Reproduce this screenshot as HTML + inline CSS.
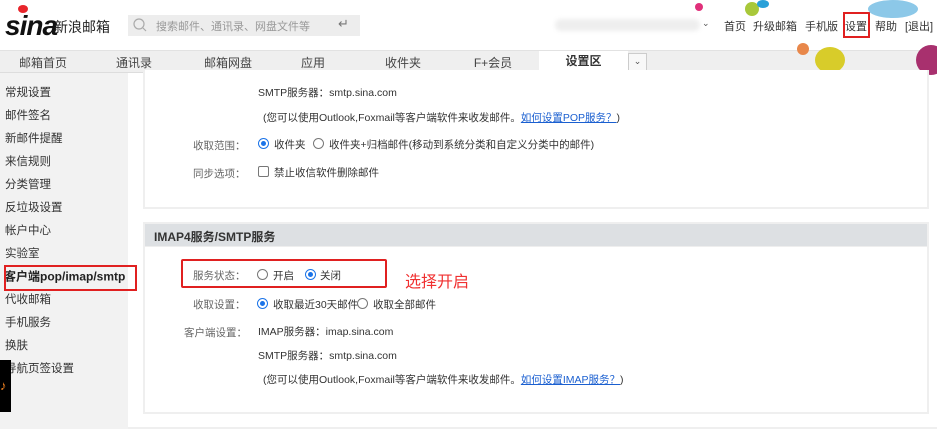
<!DOCTYPE html>
<html><head><meta charset="utf-8"><style>
*{margin:0;padding:0;box-sizing:border-box}
body{width:937px;height:429px;overflow:hidden;background:#fff;font-family:"Liberation Sans","Noto Sans CJK SC",sans-serif;font-size:12px;color:#333;position:relative}
.a{position:absolute;white-space:nowrap}
.nav{position:absolute;left:0;top:50px;width:937px;height:23px;background:#efefef;border-top:1px solid #e2e2e2;border-bottom:1px solid #ddd}
.nav span{position:absolute;top:3px;font-size:12px;color:#444;transform:translateX(-50%);white-space:nowrap}
.side{position:absolute;left:0;top:73px;width:128px;height:356px;background:#f2f2f2}
.side div{position:absolute;left:5px;font-size:11.5px;color:#333;transform:translateY(-50%);white-space:nowrap}
.panel{position:absolute;border:2px solid #efefef;background:#fff}
.lbl{color:#666;font-size:10.5px}
.r{position:absolute;width:11px;height:11px;border:1px solid #777;border-radius:50%;background:#fff}
.r.on{border-color:#1a73e8}
.r.on::after{content:"";position:absolute;left:2px;top:2px;width:5px;height:5px;border-radius:50%;background:#1a73e8}
.t{font-size:10.5px;color:#333}
a{color:#1a5fd0;text-decoration:underline}
.dot{position:absolute;border-radius:50%}
</style></head><body>
<div class="a" style="left:5px;top:10px;font:italic bold 28px 'Liberation Sans',sans-serif;color:#111;letter-spacing:-1px">sina</div>
<div class="dot" style="left:18px;top:5px;width:10px;height:8px;background:#e8252b"></div>
<div class="a" style="left:54px;top:17px;font-size:14px;color:#222">新浪邮箱</div>
<div class="a" style="left:128px;top:15px;width:232px;height:21px;background:#ededed"></div>
<svg class="a" style="left:133px;top:18px" width="14" height="14"><circle cx="6" cy="6" r="5" fill="none" stroke="#aaa" stroke-width="1.2"/><path d="M10 10l3 3" stroke="#aaa" stroke-width="1.2"/></svg>
<div class="a" style="left:156px;top:18px;font-size:11px;color:#999">搜索邮件、通讯录、网盘文件等</div>
<div class="a" style="left:338px;top:16px;font-size:13px;color:#777">↵</div>
<div class="a" style="left:555px;top:19px;width:145px;height:12px;background:#eee;border-radius:6px;filter:blur(2px)"></div>
<div class="a" style="left:702px;top:18px;font-size:9px;color:#555">⌄</div>
<div class="a" style="left:724px;top:18px;font-size:11px;color:#333">首页</div>
<div class="a" style="left:753px;top:18px;font-size:11px;color:#333">升级邮箱</div>
<div class="a" style="left:805px;top:18px;font-size:11px;color:#333">手机版</div>
<div class="a" style="left:845px;top:18px;font-size:11px;color:#333">设置</div>
<div class="a" style="left:843px;top:12px;width:27px;height:26px;border:2px solid #e02020"></div>
<div class="a" style="left:875px;top:18px;font-size:11px;color:#333">帮助</div>
<div class="a" style="left:905px;top:18px;font-size:11px;color:#333">[退出]</div>
<div class="dot" style="left:695px;top:3px;width:8px;height:8px;background:#e0307a"></div>
<div class="dot" style="left:745px;top:2px;width:14px;height:14px;background:#a8c83a"></div>
<div class="dot" style="left:757px;top:0px;width:12px;height:8px;background:#2aa0d8"></div>
<div class="dot" style="left:868px;top:0;width:50px;height:18px;background:#8cc8e8"></div>
<div class="nav">
<span style="left:43px">邮箱首页</span><span style="left:134px">通讯录</span><span style="left:228px">邮箱网盘</span><span style="left:313px">应用</span><span style="left:403px">收件夹</span><span style="left:493px">F+会员</span>
</div>
<div class="a" style="left:539px;top:51px;width:89px;height:22px;background:#fff;text-align:center;line-height:21px;font-weight:bold;font-size:12px">设置区</div>
<div class="a" style="left:628px;top:53px;width:19px;height:19px;border:1px solid #ccc;background:#f8f8f8;text-align:center;font-size:9px;line-height:15px;color:#555">⌄</div>
<div class="dot" style="left:797px;top:43px;width:12px;height:12px;background:#e8874a"></div>
<div class="dot" style="left:815px;top:47px;width:30px;height:26px;background:#d8cc2a"></div>
<div class="dot" style="left:916px;top:45px;width:30px;height:30px;background:#a8306e"></div>
<div class="side">
<div style="top:19px">常规设置</div><div style="top:42px">邮件签名</div><div style="top:65px">新邮件提醒</div><div style="top:88px">来信规则</div><div style="top:111px">分类管理</div><div style="top:134px">反垃圾设置</div><div style="top:157px">帐户中心</div><div style="top:180px">实验室</div>
<div style="top:203px;left:4px;font-weight:bold;font-size:12px;color:#222">客户端pop/imap/smtp</div>
<div style="top:226px">代收邮箱</div><div style="top:249px">手机服务</div><div style="top:272px">换肤</div><div style="top:295px">导航页签设置</div>
</div>
<div class="a" style="left:4px;top:265px;width:133px;height:26px;border:2px solid #e02020"></div>
<div class="a" style="left:0;top:360px;width:11px;height:52px;background:#000"></div>
<div class="a" style="left:0;top:378px;color:#f08020;font-size:13px">♪</div>
<div class="panel" style="left:143px;top:70px;width:786px;height:139px;border-top:none"></div>
<div class="a t" style="left:258px;top:85px">SMTP服务器：smtp.sina.com</div>
<div class="a t" style="left:263px;top:110px">(您可以使用Outlook,Foxmail等客户端软件来收发邮件。<a>如何设置POP服务？</a>)</div>
<div class="a lbl" style="left:193px;top:138px">收取范围：</div>
<div class="r on" style="left:258px;top:138px"></div><div class="a t" style="left:274px;top:137px">收件夹</div>
<div class="r" style="left:313px;top:138px"></div><div class="a t" style="left:329px;top:137px">收件夹+归档邮件(移动到系统分类和自定义分类中的邮件)</div>
<div class="a lbl" style="left:193px;top:166px">同步选项：</div>
<div class="a" style="left:258px;top:166px;width:11px;height:11px;border:1px solid #777;border-radius:2px"></div>
<div class="a t" style="left:274px;top:165px">禁止收信软件删除邮件</div>
<div class="panel" style="left:143px;top:222px;width:786px;height:192px"></div>
<div class="a" style="left:145px;top:224px;width:782px;height:23px;background:#dde0e3;border-bottom:1px solid #eee"></div>
<div class="a" style="left:154px;top:228px;font-weight:bold;font-size:12px;color:#333">IMAP4服务/SMTP服务</div>
<div class="a" style="left:181px;top:259px;width:206px;height:29px;border:2px solid #e02020;border-radius:2px"></div>
<div class="a lbl" style="left:193px;top:268px">服务状态：</div>
<div class="r" style="left:257px;top:269px"></div><div class="a t" style="left:273px;top:268px">开启</div>
<div class="r on" style="left:305px;top:269px"></div><div class="a t" style="left:320px;top:268px">关闭</div>
<div class="a" style="left:405px;top:268px;color:#f03030;font-size:16px">选择开启</div>
<div class="a lbl" style="left:193px;top:297px">收取设置：</div>
<div class="r on" style="left:257px;top:298px"></div><div class="a t" style="left:273px;top:297px">收取最近30天邮件</div>
<div class="r" style="left:357px;top:298px"></div><div class="a t" style="left:373px;top:297px">收取全部邮件</div>
<div class="a lbl" style="left:184px;top:325px">客户端设置：</div>
<div class="a t" style="left:258px;top:324px">IMAP服务器：imap.sina.com</div>
<div class="a t" style="left:258px;top:348px">SMTP服务器：smtp.sina.com</div>
<div class="a t" style="left:263px;top:372px">(您可以使用Outlook,Foxmail等客户端软件来收发邮件。<a>如何设置IMAP服务？</a>)</div>
<div class="a" style="left:128px;top:427px;width:809px;height:2px;background:#efefef"></div>
</body></html>
